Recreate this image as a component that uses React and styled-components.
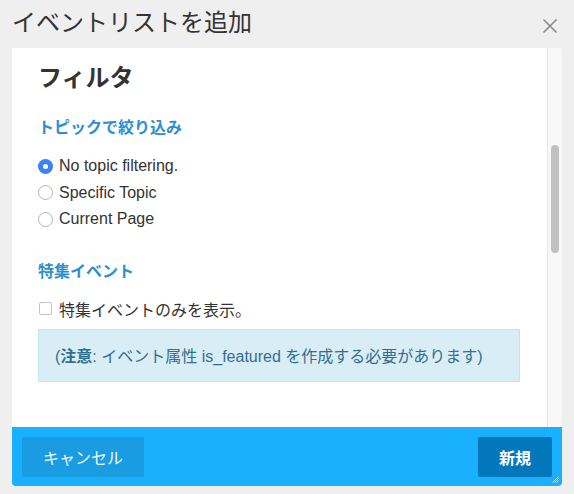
import React from "react";
import styled, { createGlobalStyle } from "styled-components";

const Global = createGlobalStyle`
  html, body { margin: 0; padding: 0; background: #efefef; }
  body { font-family: "Liberation Sans", "Noto Sans CJK JP", sans-serif; color: #333; }
  * { box-sizing: border-box; }
`;

const Page = styled.div`
  width: 574px;
  height: 494px;
  background: #efefef;
  display: flex;
  flex-direction: column;
  overflow: hidden;
`;

const Header = styled.div`
  height: 48px;
  display: flex;
  align-items: center;
  justify-content: space-between;
  padding: 0 16px 0 12px;
`;

const Title = styled.h1`
  margin: 0;
  font-size: 24px;
  line-height: 32px;
  font-weight: 400;
  color: #333;
  margin-top: -2px;
`;

const Close = styled.button`
  border: 0;
  background: none;
  padding: 0;
  width: 16px;
  height: 16px;
  display: flex;
  align-items: center;
  justify-content: center;
  color: #8a8a8a;
  margin-top: 4px;
`;

const Panel = styled.div`
  margin: 0 12px;
  height: 438px;
  display: flex;
  flex-direction: column;
  border-radius: 2px 2px 4px 4px;
  overflow: hidden;
  position: relative;
`;

const Body = styled.div`
  height: 379px;
  display: flex;
`;

const Content = styled.div`
  flex: 1;
  background: #fff;
  padding: 14px 27px 0 26px;
`;

const Track = styled.div`
  width: 15px;
  border-left: 1px solid #e4e4e4;
  background: #f8f8f8;
  padding: 97px 3px 0 3px;
`;

const Thumb = styled.div`
  height: 108px;
  border-radius: 4px;
  background: #c1c1c1;
`;

const Heading = styled.h2`
  margin: 0;
  font-size: 24px;
  line-height: 32px;
  font-weight: 700;
  color: #333;
`;

const SectionLabel = styled.h3`
  margin: ${(p) => p.$top}px 0 0;
  font-size: 16px;
  line-height: 22px;
  font-weight: 700;
  color: #2e8fcf;
`;

const RadioList = styled.div`
  margin-top: 14px;
  display: flex;
  flex-direction: column;
`;

const OptionRow = styled.label`
  display: flex;
  align-items: center;
  gap: 6px;
  height: 26.5px;
  font-size: 16px;
  color: #333;
`;

const Radio = styled.span`
  width: 15px;
  height: 15px;
  border-radius: 50%;
  flex: none;
  display: flex;
  align-items: center;
  justify-content: center;
  border: ${(p) => (p.$checked ? "none" : "1px solid #b4b4b4")};
  background: ${(p) => (p.$checked ? "#3a82f7" : "#fff")};
  &::after {
    content: "";
    display: ${(p) => (p.$checked ? "block" : "none")};
    width: 5px;
    height: 5px;
    border-radius: 50%;
    background: #fff;
  }
`;

const CheckRow = styled.label`
  margin-top: 14px;
  display: flex;
  align-items: center;
  gap: 7px;
  height: 24px;
  font-size: 16px;
  color: #333;
`;

const Checkbox = styled.span`
  width: 13px;
  height: 13px;
  border: 1px solid #c4c4c4;
  border-radius: 2px;
  background: #fff;
  flex: none;
  margin-left: 1px;
`;

const Alert = styled.div`
  margin-top: 8px;
  border: 1px solid #bce8f1;
  background: #d9edf7;
  color: #31708f;
  padding: 16px 16px 14px;
  font-size: 16px;
  line-height: 21px;
`;

const Footer = styled.div`
  height: 59px;
  background: #19b0fe;
  display: flex;
  align-items: center;
  justify-content: space-between;
  padding: 0 10px;
`;

const Button = styled.button`
  height: 40px;
  border: 0;
  border-radius: 2px;
  font-family: inherit;
  font-size: 16px;
  color: #fff;
  padding: 0;
  width: ${(p) => p.$w}px;
  background: ${(p) => (p.$primary ? "#0377bb" : "#1a9be0")};
  font-weight: ${(p) => (p.$primary ? 700 : 400)};
  opacity: ${(p) => (p.$primary ? 1 : 0.95)};
`;

const Grip = styled.svg`
  position: absolute;
  right: 3px;
  bottom: 3px;
`;

export default function App() {
  return (
    <Page>
      <Global />
      <Header>
        <Title>イベントリストを追加</Title>
        <Close aria-label="close">
          <svg width="16" height="16" viewBox="0 0 16 16">
            <path d="M1.5 1.5 L14.5 14.5 M14.5 1.5 L1.5 14.5" stroke="currentColor" strokeWidth="1.6" fill="none" />
          </svg>
        </Close>
      </Header>
      <Panel>
        <Body>
          <Content>
            <Heading>フィルタ</Heading>
            <SectionLabel $top={23}>トピックで絞り込み</SectionLabel>
            <RadioList>
              <OptionRow><Radio $checked />No topic filtering.</OptionRow>
              <OptionRow><Radio />Specific Topic</OptionRow>
              <OptionRow><Radio />Current Page</OptionRow>
            </RadioList>
            <SectionLabel $top={28}>特集イベント</SectionLabel>
            <CheckRow><Checkbox />特集イベントのみを表示。</CheckRow>
            <Alert>(<b>注意</b>: イベント属性 is_featured を作成する必要があります)</Alert>
          </Content>
          <Track><Thumb /></Track>
        </Body>
        <Footer>
          <Button $w={122}>キャンセル</Button>
          <Button $w={74} $primary>新規</Button>
        </Footer>
        <Grip width="7" height="7" viewBox="0 0 7 7">
          <path d="M6.5 0.5 L0.5 6.5 M6.5 2.5 L2.5 6.5 M6.5 4.5 L4.5 6.5" stroke="rgba(255,255,255,0.8)" strokeWidth="0.8" />
        </Grip>
      </Panel>
    </Page>
  );
}
